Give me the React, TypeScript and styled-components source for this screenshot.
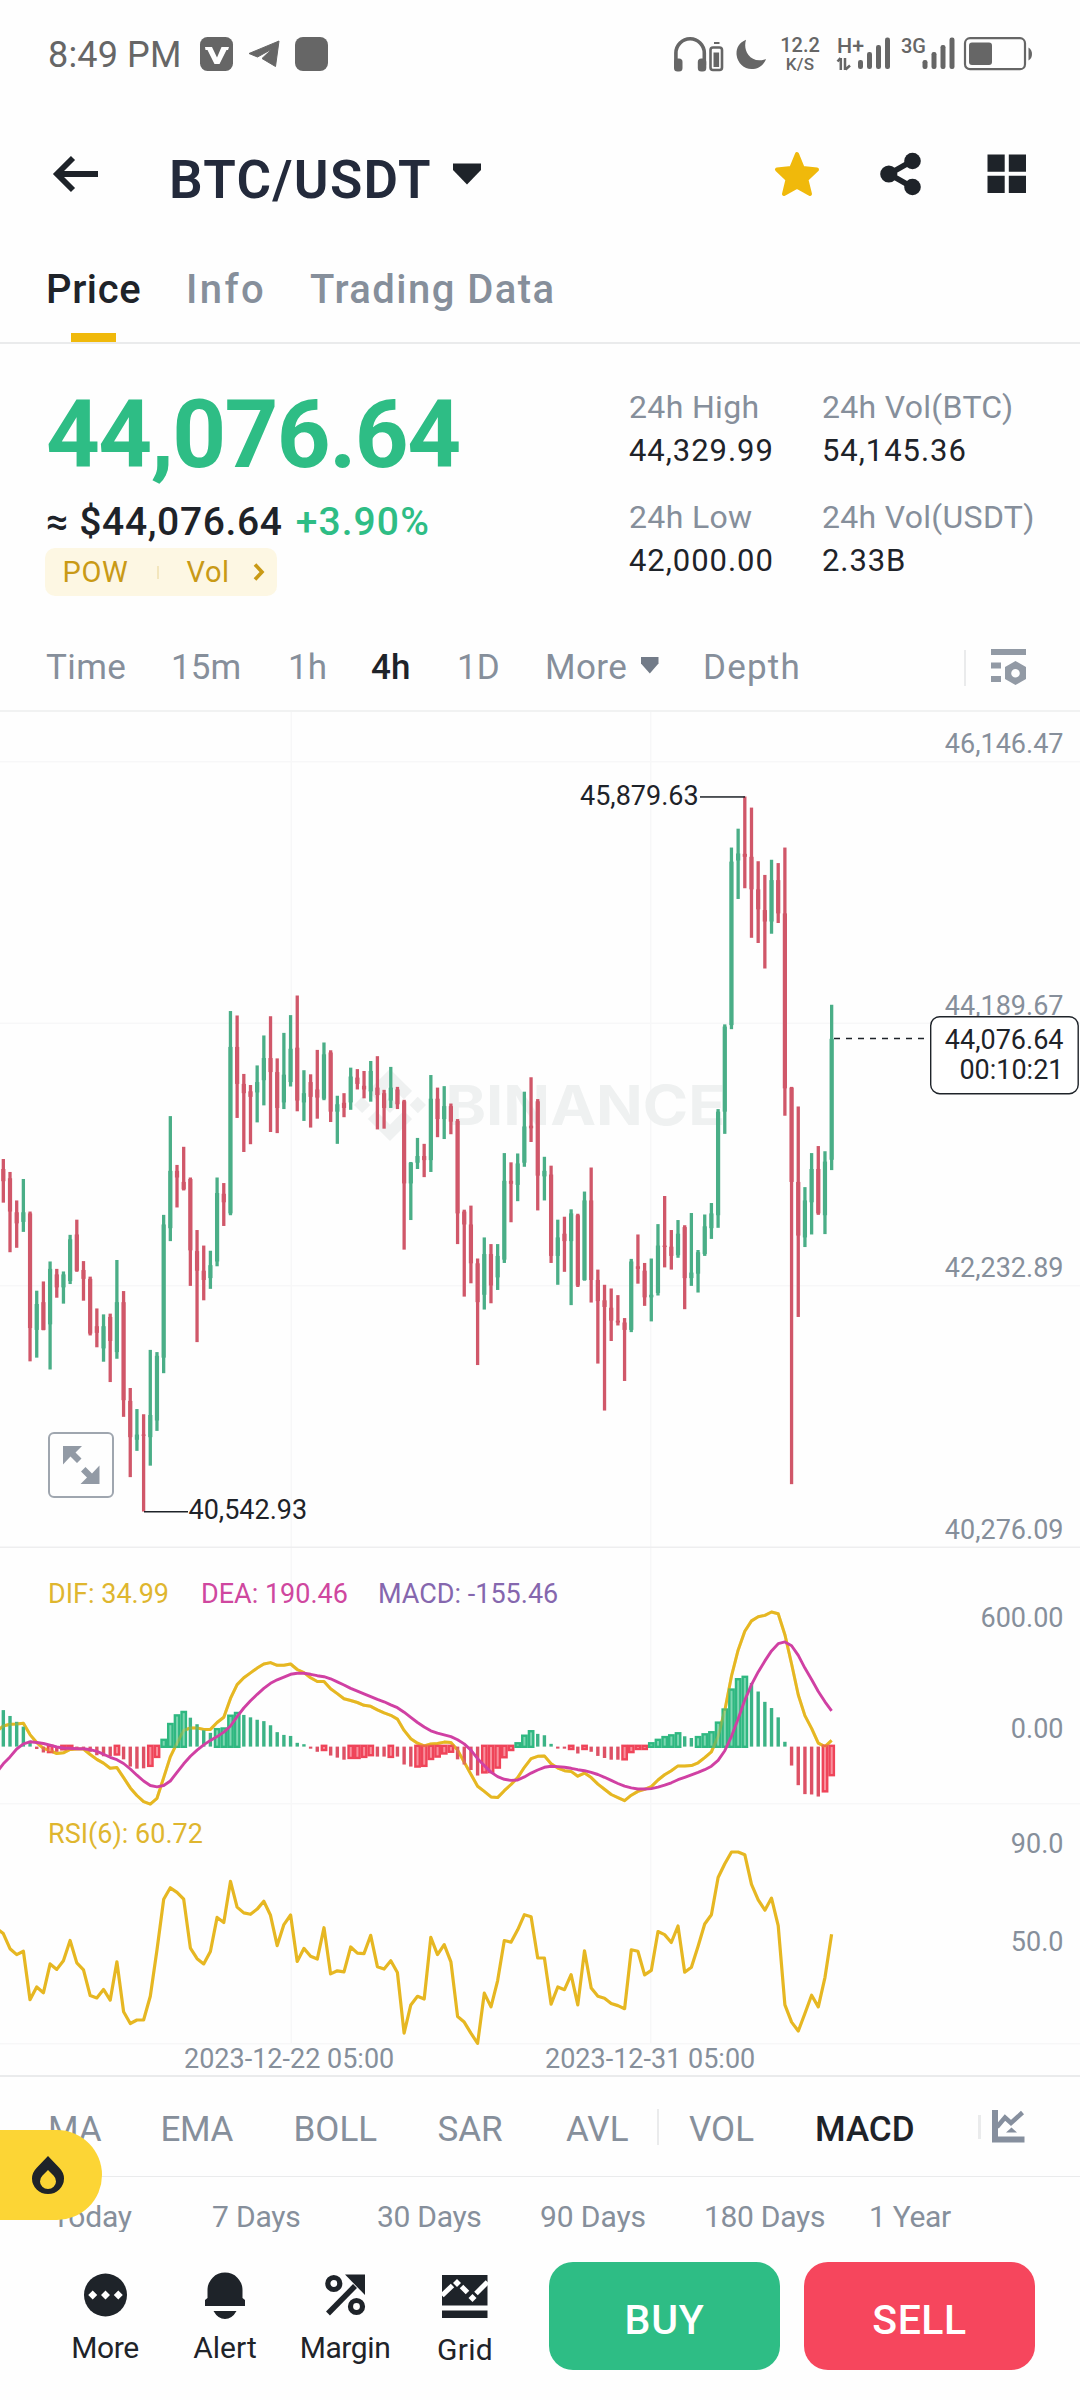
import React from "react";
import styled, { createGlobalStyle } from "styled-components";

const INK = "#1e2329";
const MUTED = "#868f9b";
const GREEN = "#2ebd85";
const RED = "#f6465d";
const GOLD = "#f0b90b";
const LINE = "#eaebec";
const STATUS = "#666666";

const Global = createGlobalStyle`
  html, body { margin: 0; padding: 0; background: #fefefe; }
  * { box-sizing: border-box; }
  svg { display: block; flex: none; overflow: visible; }
`;

const Page = styled.div`
  width: 1080px;
  height: 2400px;
  display: flex;
  flex-direction: column;
  overflow: hidden;
  position: relative;
  background: #fefefe;
  color: ${INK};
  font-family: Roboto, "Noto Sans", sans-serif;
`;

/* ---------- text ---------- */

const Text = styled.span<{
  $size: number;
  $color?: string;
  $weight?: number;
  $track?: number;
  $line?: number;
  $drop?: number;
}>`
  display: block;
  white-space: nowrap;
  font-size: ${(p) => p.$size}px;
  line-height: ${(p) => p.$line ?? p.$size}px;
  font-weight: ${(p) => p.$weight ?? 400};
  color: ${(p) => p.$color ?? INK};
  letter-spacing: ${(p) => p.$track ?? 0}px;
  padding-top: ${(p) => p.$drop ?? 0}px;
`;

/* ---------- status bar ---------- */

const StatusBar = styled.div`
  height: 108px;
  flex: none;
  display: flex;
  align-items: center;
  justify-content: space-between;
  padding: 0 46px 0 48px;
`;

const StatusLeft = styled.div`
  display: grid;
  grid-template-columns: 152px 48px 47px 34px;
  align-items: center;
`;

const StatusRight = styled.div`
  display: grid;
  grid-template-columns: 62px 43px 58px 64px 63px 70px;
  align-items: center;
`;

const Speed = styled.div`
  display: flex;
  flex-direction: column;
  align-items: center;
  width: 42px;
`;

function Bars({ x }: { x: number }) {
  const tops = [22, 14, 7, -0.5];
  return (
    <g fill={STATUS}>
      {tops.map((t, i) => (
        <rect key={i} x={x + i * 9} y={t + 2} width={5} height={32 - t - 1} rx={2.2} />
      ))}
    </g>
  );
}

function Status() {
  return (
    <StatusBar>
      <StatusLeft>
        <Text $size={36} $color={STATUS} $line={42} $track={0.15} $drop={2}>
          8:49 PM
        </Text>
        <svg width="33" height="34" viewBox="0 0 33 34">
          <rect width="33" height="34" rx="7.5" fill={STATUS} />
          <path d="M5 10h7l5 10.5L21.500 10H29l-1 3h-1.500L19.500 27h-5L7.500 13H5.500z" fill="#fff" />
        </svg>
        <svg width="32" height="28" viewBox="0 0 32 28">
          <path d="M1 13.500 31 1l-3.500 25.500-13.500-8L24 9 9.500 17z" fill={STATUS} stroke={STATUS} strokeLinejoin="round" />
        </svg>
        <svg width="34" height="34" viewBox="0 0 34 34">
          <rect width="33" height="34" rx="8" fill={STATUS} />
        </svg>
      </StatusLeft>
      <StatusRight>
        <svg width="50" height="36" viewBox="0 0 50 36">
          <path d="M1.900 29V17a14.200 14.200 0 0 1 28.400 0v12" fill="none" stroke={STATUS} strokeWidth="3.600" />
          <rect x="0" y="22.500" width="8.500" height="13" rx="3.500" fill={STATUS} />
          <rect x="23.800" y="22.500" width="8.500" height="13" rx="3.500" fill={STATUS} />
          <rect x="40" y="6" width="5.500" height="2" fill={STATUS} />
          <rect x="36.500" y="11.500" width="11.500" height="22.500" rx="2.500" fill="none" stroke={STATUS} strokeWidth="2.600" />
          <rect x="39.500" y="16.500" width="5.600" height="14.500" fill={STATUS} />
        </svg>
        <svg width="31" height="31" viewBox="0 0 31 31">
          <path d="M10 .8C2.500 4 0 10 .6 16 1.500 24 8 30 15.500 30c7 0 12.500-4 14.500-10-8 3-14 .5-17.500-4C9 11.500 8.500 6 10 .8z" fill={STATUS} />
        </svg>
        <Speed>
          <Text $size={20} $line={20} $color={STATUS} $weight={500}>12.2</Text>
          <Text $size={17} $line={19} $color={STATUS} $weight={500} $track={0.3}>K/S</Text>
        </Speed>
        <svg width="54" height="36" viewBox="0 0 54 36">
          <text x="0" y="17" fontSize="21" fontWeight="500" fill={STATUS} textLength="27" lengthAdjust="spacingAndGlyphs">H+</text>
          <path d="M.5 25.500 3.500 22M3.800 22v12M8 22v12M8.500 33.500 13 29.500" stroke={STATUS} strokeWidth="2.500" fill="none" />
          <Bars x={21} />
        </svg>
        <svg width="56" height="36" viewBox="0 0 56 36">
          <text x="0" y="17" fontSize="21" fontWeight="500" fill={STATUS} textLength="25" lengthAdjust="spacingAndGlyphs">3G</text>
          <Bars x={21.5} />
        </svg>
        <svg width="70" height="34" viewBox="0 0 70 34">
          <rect x="1" y="1.200" width="60" height="31" rx="5" fill="none" stroke={STATUS} strokeWidth="2.200" />
          <rect x="5" y="5.500" width="23" height="22.500" rx="3" fill={STATUS} />
          <path d="M64.500 10.500q3.500 2 3.500 6.500t-3.500 6.500z" fill={STATUS} />
        </svg>
      </StatusRight>
    </StatusBar>
  );
}

/* ---------- header ---------- */

const HeaderBar = styled.header`
  height: 132px;
  flex: none;
  display: flex;
  align-items: center;
  padding: 0 53px 0 53px;
`;

const PairButton = styled.div`
  display: flex;
  align-items: center;
  gap: 21px;
  margin-left: 70px;
  flex: 1;
`;

const PairName = styled.div`
  padding-top: 12px;
`;

const HeaderActions = styled.div`
  display: grid;
  grid-template-columns: 106px 107px 40px;
  align-items: center;
`;

function Header() {
  return (
    <HeaderBar>
      <svg width="46" height="36" viewBox="0 0 46 36">
        <path d="M45 18H5M20 2 4 18l16 16" fill="none" stroke={INK} strokeWidth="5.800" />
      </svg>
      <PairButton>
        <PairName>
          <Text $size={53} $line={60} $weight={600} $color="#232a3b" $track={1.3}>BTC/USDT</Text>
        </PairName>
        <svg width="28" height="22" viewBox="0 0 28 22">
          <path d="M0 .5h28V7L14 21.500 0 7z" fill={INK} />
        </svg>
      </PairButton>
      <HeaderActions>
        <svg width="46" height="46" viewBox="0 0 46 46">
          <path
            d="M23 3l5.700 14 14.300 1.500-10.600 10 3.600 14.500L23 35.800 10 43l3.500-14.500L3 18.500 17.300 17z"
            fill={GOLD}
            stroke={GOLD}
            strokeWidth="4"
            strokeLinejoin="round"
          />
        </svg>
        <svg width="42" height="44" viewBox="0 0 42 44">
          <path d="M32 9 9 22l23 13" fill="none" stroke={INK} strokeWidth="5.500" />
          <circle cx="32.500" cy="9" r="8.300" fill={INK} />
          <circle cx="8.800" cy="22" r="8.600" fill={INK} />
          <circle cx="32.500" cy="35" r="8.300" fill={INK} />
        </svg>
        <svg width="40" height="40" viewBox="0 0 40 40">
          <path d="M.5.500h17.200v17.200H.5zM21.800.500H39v17.200H21.800zM.5 21.800h17.200V39H.5zM21.800 21.800H39V39H21.800z" fill={INK} />
        </svg>
      </HeaderActions>
    </HeaderBar>
  );
}

const TabRow = styled.nav`
  height: 104px;
  flex: none;
  display: grid;
  grid-template-columns: 140px 124px auto;
  justify-content: start;
  padding-left: 46px;
  border-bottom: 2px solid ${LINE};
`;

const Tab = styled.div`
  display: flex;
  flex-direction: column;
  justify-content: space-between;
  padding-top: 26px;
`;

const TabMark = styled.i`
  width: 45px;
  height: 9px;
  margin-left: 25px;
  background: ${GOLD};
`;

/* ---------- quote ---------- */

const Quote = styled.section`
  height: 260px;
  flex: none;
  display: grid;
  grid-template-columns: 583px 193px auto;
  justify-content: start;
  padding: 36px 0 0 46px;
`;

const LastPrice = styled.div`
  display: flex;
  flex-direction: column;
`;

const FiatRow = styled.div`
  display: flex;
  gap: 13px;
  margin-top: 7px;
`;

const Tags = styled.div`
  width: 232px;
  height: 48px;
  margin: 2px 0 0 -1px;
  border-radius: 10px;
  background: #fdf7e3;
  display: grid;
  grid-template-columns: 94px 30px 66px 12px;
  align-items: center;
  padding-left: 17.5px;
`;

const TagRule = styled.i`
  width: 2px;
  height: 13px;
  background: #f3e6bd;
`;

const Stats = styled.div`
  display: grid;
  grid-template-rows: 50px 60px 50px 40px;
  padding-top: 1px;
`;

/* ---------- intervals ---------- */

const Intervals = styled.div`
  height: 108px;
  flex: none;
  display: grid;
  grid-template-columns: 125px 117px 83px 86px 88px 96px 62px 261px 27px 40px;
  align-items: center;
  padding-left: 46px;
  padding-top: 21px;
  border-bottom: 2px solid #f1f2f2;
`;

const Rule = styled.i<{ $h: number; $w?: number }>`
  display: block;
  width: ${(p) => p.$w ?? 2}px;
  height: ${(p) => p.$h}px;
  background: ${LINE};
`;

/* ---------- chart ---------- */

const ChartArea = styled.section`
  position: relative;
  height: 1363px;
  flex: none;
`;

const ExpandButton = styled.div`
  position: absolute;
  left: 48px;
  top: 720px;
  width: 66px;
  height: 66px;
  border: 2px solid #9fa6af;
  border-radius: 6px;
  display: flex;
  align-items: center;
  justify-content: center;
  background: #fefefe;
`;

// Each candle: direction, high, low, body top, body bottom (chart units below y = 960).
const candles: [string, number, number, number, number][] = [
  ["R",538,656,565,598],["R",573,790,590,680],["R",650,778,682,712],["G",592,735,682,708],["R",680,1085,685,995],
  ["G",894,1075,930,1000],["R",869,1001,925,1000],["G",815,1107,835,985],["R",835,913,850,885],["G",842,929,850,885],
  ["G",743,876,755,868],["R",702,843,742,840],["R",814,921,838,862],["R",856,1015,862,1010],["R",942,1047,990,1008],
  ["G",958,1086,990,1050],["R",956,1141,965,1030],["G",811,1078,925,1060],["R",895,1235,925,1190],["R",1157,1398,1192,1290],
  ["G",1214,1327,1283,1297],["R",1228,1491,1283,1286],["G",1054,1367,1230,1290],["G",1060,1273,1070,1245],["G",689,1117,715,1075],
  ["G",422,760,570,725],["R",554,669,570,588],["R",505,623,600,620],["R",588,881,592,785],["R",730,1033,787,840],
  ["R",772,920,840,865],["G",786,889,825,860],["G",588,828,630,815],["R",603,719,632,655],["G",138,690,235,685],
  ["R",150,427,235,335],["R",308,519,335,360],["R",338,498,355,370],["G",285,439,330,358],["G",204,393,265,325],
  ["R",152,465,265,303],["R",266,468,303,400],["G",197,403,310,385],["G",149,342,240,330],["R",96,409,237,380],
  ["G",298,435,360,385],["R",309,453,330,370],["R",243,429,350,372],["G",223,379,255,375],["R",244,438,250,410],
  ["G",367,497,390,410],["R",360,425,386,400],["G",291,405,315,385],["R",295,350,318,335],["R",300,374,340,350],
  ["G",273,383,300,355],["R",260,458,345,365],["R",351,456,360,400],["G",289,400,345,380],["R",343,403,350,390],
  ["R",378,783,382,604],["G",546,703,548,604],["G",481,565,530,548],["R",497,587,530,541],["G",311,573,375,541],
  ["R",345,479,375,430],["G",341,484,395,430],["R",388,471,395,437],["R",430,768,435,685],["R",675,910,680,715],
  ["R",664,874,715,820],["R",807,1095,820,925],["G",750,945,795,905],["R",768,928,795,880],["G",768,892,800,858],
  ["G",522,819,597,810],["R",547,709,597,605],["G",523,652,550,608],["G",356,559,450,548],["R",317,492,448,455],
  ["R",376,677,382,583],["G",532,650,570,585],["R",556,819,580,800],["G",702,878,750,800],["R",694,843,740,760],
  ["G",674,933,685,760],["R",686,884,690,880],["G",626,867,650,865],["R",561,926,650,865],["R",837,1091,865,922],
  ["R",878,1218,920,938],["R",888,1030,940,975],["R",906,988,975,980],["R",968,1138,980,1000],["G",808,1006,815,1000],
  ["R",742,875,828,835],["R",819,935,840,912],["G",807,977,905,912],["G",714,907,772,900],["R",638,831,772,776],
  ["R",730,837,775,800],["G",703,805,740,798],["R",717,944,722,860],["G",684,881,845,860],["G",784,899,790,848],
  ["G",688,800,720,795],["G",657,754,685,725],["G",403,724,410,690],["G",174,470,180,410],["G",-304,187,-266,176],
  ["G",-355,-165,-288,-269],["R",-442,-194,-287,-279],["R",-412,-60,-279,-191],["R",-267,-46,-191,-137],["R",-230,23,-135,-104],
  ["G",-271,-71,-216,-104],["R",-262,-100,-216,-126],["R",-304,421,-126,347],["R",343,1417,345,600],["R",396,965,600,745],
  ["G",614,776,650,750],["G",522,742,565,655],["R",503,689,565,685],["G",517,741,545,690],["G",121,568,213,540],
];

// Histogram end points; a trailing "h" marks a hollow bar.
const hist =
  "494 511 528 542 583 607 617 620h 615 612h 611h 606 606 615 625 628 628 627h 637 658 664 663 660h 634h 578h 532h 507h 497h 516 535 552 560 547h 545h 508h 500h 508 515 522 526 538 558 566 569 589 593 606 615 614h 626 632 638 637h 637h 634h 629h 629 629 634h 629 652 658 662h 660h 640h 633h 624h 619h 637 652 668 684 679h 678h 665h 635h 614h 588h 566h 553h 563 567 592 605 606 611h 620 611h 615 627 633 638 638 641h 620h 611h 611h 588h 578h 570h 565h 559h 570 575 570h 562h 556h 528h 490h 432h 402h 395h 415 440 470 488 515 586 655 712 738 739 745 734h 687h".split(" ");

const nums = (s: string) => s.split(" ").map(Number);

const dif = nums(
  "555 540 535 534 532 565 588 605 612 620 618 608 607 607 623 637 648 663 661 690 720 742 760 767 750 690 630 590 553 546 546 550 550 530 515 460 420 400 386 372 360 356 364 364 360 376 385 400 411 411 432 446 461 466 472 480 483 493 502 509 520 553 577 590 598 592 591 587 588 610 645 680 715 730 746 748 728 710 690 660 635 628 627 650 662 670 672 686 677 690 709 724 739 748 757 741 730 724 716 697 682 670 656 656 655 647 632 615 570 495 395 320 265 235 223 219 209 214 275 360 450 510 547 590 600 582"
);
const dea = nums(
  "675 650 630 607 592 586 588 591 596 601 604 605 606 606 609 614 622 631 638 649 665 683 700 713 717 713 700 675 650 628 610 595 582 571 558 540 513 488 467 448 431 416 406 398 390 387 387 390 394 397 403 412 421 431 439 447 455 463 470 479 487 500 515 530 543 554 561 566 571 580 592 610 635 655 674 687 695 698 697 688 677 668 660 657 658 660 663 667 670 675 681 689 698 707 715 720 723 723 722 718 712 705 696 689 682 675 667 657 640 612 570 520 465 420 383 351 322 301 296 307 335 372 405 440 470 496"
);
const rsi = nums(
  "1128 1143 1187 1204 1194 1335 1298 1315 1231 1247 1222 1163 1228 1248 1323 1330 1305 1336 1225 1370 1404 1394 1394 1325 1190 1043 1010 1023 1043 1185 1216 1231 1195 1096 1111 991 1066 1083 1087 1072 1049 1090 1178 1117 1089 1224 1186 1209 1217 1126 1260 1251 1254 1182 1200 1201 1148 1239 1246 1222 1256 1432 1350 1325 1333 1154 1204 1175 1225 1384 1400 1432 1462 1316 1356 1280 1163 1168 1132 1088 1094 1214 1214 1348 1298 1306 1262 1350 1193 1301 1325 1331 1346 1352 1361 1190 1194 1263 1250 1137 1146 1169 1121 1255 1241 1180 1115 1088 980 940 906 906 914 1000 1045 1075 1040 1120 1350 1400 1426 1375 1322 1356 1270 1145"
);

const xAt = (i: number) => 3.33 + i * 6.68;
const candleY = (v: number) => 960 + v / 2.7034;
const studyY = (v: number) => 1540 + v / 2.904;
// Study series begin one step left of the visible area.
const linePath = (series: number[]) =>
  series.map((v, k) => `${k ? "L" : "M"}${xAt(k - 1).toFixed(1)} ${studyY(v).toFixed(1)}`).join("");

const ZERO = studyY(600);

function AxisLabel({ y, children, color = MUTED }: { y: number; children: string; color?: string }) {
  return (
    <text x={1063.5} y={y} textAnchor="end" fill={color}>
      {children}
    </text>
  );
}

function Chart() {
  return (
    <ChartArea>
      <svg width="1080" height="1363" viewBox="0 712 1080 1363" fontSize="27" fontFamily="Roboto, sans-serif">
        <g fill="#f7f7f8">
          {[761, 1022.5, 1285, 1803, 2043].map((y) => (
            <rect key={y} x="0" y={y} width="1080" height="1.500" />
          ))}
          <rect x="290.500" y="712" width="1.500" height="1332" />
          <rect x="650" y="712" width="1.500" height="1332" />
        </g>
        <rect x="0" y="1546.500" width="1080" height="1.500" fill="#eeeeef" />

        <g fill="#eff1f1">
          <path
            transform="translate(354 1069) scale(3)"
            d="M16.624 13.920l2.718 2.715-7.353 7.353-7.353-7.352 2.717-2.716 4.636 4.660 4.635-4.660zm4.637-4.636L24 12l-2.715 2.716L18.568 12l2.693-2.716zm-9.272 0l2.716 2.692-2.716 2.717L9.272 12l2.717-2.716zm-9.273 0L5.409 12l-2.692 2.692L0 12l2.716-2.716zM11.989.012l7.353 7.329-2.718 2.715-4.635-4.636-4.636 4.660-2.717-2.715 7.353-7.353z"
          />
          <text x="445.500" y="1124.500" fontFamily="Inter, sans-serif" fontWeight="700" fontSize="54.500" textLength="280" lengthAdjust="spacingAndGlyphs">
            BINANCE
          </text>
        </g>

        {candles.map(([dir, high, low, top, bottom], i) => (
          <g key={i} fill={dir === "G" ? "#4aae87" : "#d05769"}>
            <rect x={xAt(i) - 1.65} y={candleY(high)} width={3.3} height={candleY(low) - candleY(high)} />
            <rect x={xAt(i) - 2.1} y={candleY(top)} width={4.2} height={candleY(bottom) - candleY(top)} />
          </g>
        ))}

        <g fill={INK}>
          <text x="580" y="804.700">45,879.63</text>
          <rect x="700" y="796.200" width="45" height="1.500" />
          <text x="188.500" y="1518.700">40,542.93</text>
          <rect x="144" y="1511" width="44" height="1.500" />
        </g>

        <AxisLabel y={752.9}>46,146.47</AxisLabel>
        <AxisLabel y={1014.8}>44,189.67</AxisLabel>
        <AxisLabel y={1276.9}>42,232.89</AxisLabel>
        <AxisLabel y={1539}>40,276.09</AxisLabel>

        <path d="M834 1038.500h90" stroke={INK} strokeWidth="1.500" strokeDasharray="6 6" />
        <rect x="930.700" y="1016.700" width="147.500" height="77" rx="9" fill="#fff" stroke={INK} strokeWidth="1.400" />
        <AxisLabel y={1048.5} color={INK}>44,076.64</AxisLabel>
        <AxisLabel y={1078.5} color={INK}>00:10:21</AxisLabel>

        <text x="48" y="1603" fill="#dfb62f">DIF: 34.99</text>
        <text x="201" y="1603" fill="#cf479f">DEA: 190.46</text>
        <text x="378" y="1603" fill="#8567ae">MACD: -155.46</text>
        <AxisLabel y={1626.5}>600.00</AxisLabel>
        <AxisLabel y={1737.7}>0.00</AxisLabel>

        <path d={linePath(dif)} fill="none" stroke="#e6b722" strokeWidth="3" strokeLinejoin="round" />
        {hist.map((raw, i) => {
          const hollow = raw.endsWith("h");
          const end = studyY(parseInt(raw, 10));
          const top = Math.min(end, ZERO);
          const h = Math.max(Math.abs(end - ZERO), 2);
          const up = end < ZERO;
          return hollow ? (
            <rect
              key={i}
              x={xAt(i) - 2.15}
              y={up ? top + 0.8 : top - 0.8}
              width={4.4}
              height={Math.max(h - 0.6, 2)}
              fill={up ? "#7fd6b2" : "#f9909d"}
              stroke={up ? "#2fb881" : "#ef4459"}
              strokeWidth="2.400"
            />
          ) : (
            <rect key={i} x={xAt(i) - 1.7} y={top} width={3.4} height={h} fill={up ? "#3cb386" : "#dd5165"} />
          );
        })}
        <path d={linePath(dif)} fill="none" stroke="#e6b722" strokeWidth="3" strokeLinejoin="round" opacity="0.350" />
        <path d={linePath(dea)} fill="none" stroke="#d040a3" strokeWidth="2.900" strokeLinejoin="round" />

        <text x="48" y="1843" fill="#dfb62f">RSI(6): 60.72</text>
        <AxisLabel y={1852.7}>90.0</AxisLabel>
        <AxisLabel y={1950.5}>50.0</AxisLabel>
        <path d={linePath(rsi)} fill="none" stroke="#e6b722" strokeWidth="3.200" strokeLinejoin="round" />

        <text x="184" y="2067.500" fill={MUTED}>2023-12-22 05:00</text>
        <text x="545" y="2067.500" fill={MUTED}>2023-12-31 05:00</text>
      </svg>
      <ExpandButton>
        <svg width="37" height="38" viewBox="0 0 37 38" fill="#929aa5">
          <path d="M0 0h19l-6.500 6.500 6 6-4.500 4.500-6.500-6.500L0 18.500zM36.500 38h-19l6.500-6.500-6-6 4.500-4.500 6.500 6.500 7.500-8z" />
        </svg>
      </ExpandButton>
    </ChartArea>
  );
}

/* ---------- indicators and ranges ---------- */

const Indicators = styled.div`
  height: 102px;
  flex: none;
  display: grid;
  grid-template-columns: 112.5px 133px 144px 128.5px 91px 32px 126px 163px 14px 34px;
  align-items: center;
  padding-left: 48px;
  border-top: 2px solid ${LINE};
  border-bottom: 1px solid ${LINE};
`;

const Ranges = styled.div`
  height: 55px;
  flex: none;
  overflow: hidden;
  display: grid;
  grid-template-columns: 160px 165px 163px 164px 165px auto;
  justify-content: start;
  padding: 20px 0 0 52px;
`;

const HotButton = styled.div`
  position: absolute;
  left: 0;
  top: 2130px;
  width: 102px;
  height: 90px;
  padding-left: 32px;
  display: flex;
  align-items: center;
  border-radius: 0 45px 45px 0;
  background: #fcd535;
`;

/* ---------- bottom bar ---------- */

const BottomBar = styled.footer`
  flex: 1;
  display: grid;
  grid-template-columns: 122px 118px 122px 118px 25px 231px 24px 231px;
  justify-content: start;
  padding: 30px 0 0 44px;
`;

const Action = styled.div<{ $shift?: number }>`
  display: flex;
  flex-direction: column;
  align-items: center;
  padding-top: ${(p) => 8 + (p.$shift ?? 0)}px;
`;

const ActionIcon = styled.div`
  height: 50px;
  display: flex;
  align-items: center;
`;

const TradeButton = styled.div<{ $bg: string }>`
  height: 108px;
  border-radius: 24px;
  background: ${(p) => p.$bg};
  display: flex;
  align-items: center;
  justify-content: center;
  padding-top: 8px;
`;

function Footer() {
  return (
    <BottomBar>
      <Action>
        <ActionIcon>
          <svg width="43" height="44" viewBox="0 0 43 44">
            <circle cx="21.500" cy="22" r="21.500" fill={INK} />
            <path d="M8.700 17.500l4.500 4.500-4.500 4.500L4.200 22zM21.500 17.500L26 22l-4.500 4.500L17 22zM34.300 17.500l4.500 4.500-4.500 4.500-4.500-4.500z" fill="#fff" />
          </svg>
        </ActionIcon>
        <Text $size={30} $line={52} $track={-0.4} $drop={2}>More</Text>
      </Action>
      <Action>
        <ActionIcon>
          <svg width="40" height="47" viewBox="0 0 40 47" fill={INK}>
            <path d="M0 34v-6l2.500-2V18a17.500 17.500 0 0 1 35 0v8l2.500 2v6zM8.500 39h23q-4.500 8-11.500 8t-11.500-8z" />
          </svg>
        </ActionIcon>
        <Text $size={30} $line={52} $drop={2}>Alert</Text>
      </Action>
      <Action>
        <ActionIcon>
          <svg width="41" height="42" viewBox="0 0 41 42">
            <path d="M3 39.500 30 12" stroke={INK} strokeWidth="5.500" />
            <path d="M20 .5h20v20.500z" fill={INK} />
            <circle cx="8.800" cy="9.500" r="6" fill="none" stroke={INK} strokeWidth="5.200" />
            <circle cx="31.500" cy="32.500" r="6" fill="none" stroke={INK} strokeWidth="5.200" />
          </svg>
        </ActionIcon>
        <Text $size={30} $line={52} $track={-0.4} $drop={2}>Margin</Text>
      </Action>
      <Action $shift={2}>
        <ActionIcon>
          <svg width="46" height="44" viewBox="0 0 46 44">
            <path d="M0 0h45.500v30.500H0zM0 35.500h45.500V43H0z" fill={INK} />
            <path d="M0 20.500 10.500 10.500M19.500 11.500l6 6M34 18.500 45.500 7" stroke="#fff" strokeWidth="5" fill="none" />
            <path d="M15 4l4 4-4 4-4-4zM30.500 19l4 4-4 4-4-4z" fill="#fff" />
          </svg>
        </ActionIcon>
        <Text $size={30} $line={52} $track={0.3} $drop={2}>Grid</Text>
      </Action>
      <i />
      <TradeButton $bg={GREEN}>
        <Text $size={41} $weight={500} $color="#fff" $track={0.7}>BUY</Text>
      </TradeButton>
      <i />
      <TradeButton $bg={RED}>
        <Text $size={41} $weight={500} $color="#fff" $track={0.5}>SELL</Text>
      </TradeButton>
    </BottomBar>
  );
}

const intervalsBeforeMore: [string, boolean, number][] = [
  ["Time", false, 0.4],
  ["15m", false, 0.1],
  ["1h", false, 0],
  ["4h", true, 0.2],
  ["1D", false, 0],
  ["More", false, 0.4],
];

export default function App() {
  return (
    <Page>
      <Global />
      <Status />
      <Header />
      <TabRow>
        <Tab>
          <Text $size={40} $line={48} $weight={500} $track={0.6}>Price</Text>
          <TabMark />
        </Tab>
        <Tab>
          <Text $size={40} $line={48} $weight={500} $color={MUTED} $track={2.4}>Info</Text>
        </Tab>
        <Tab>
          <Text $size={40} $line={48} $weight={500} $color={MUTED} $track={1.45}>Trading Data</Text>
        </Tab>
      </TabRow>

      <Quote>
        <LastPrice>
          <Text $size={94} $line={111} $weight={700} $color={GREEN} $track={-1.6}>44,076.64</Text>
          <FiatRow>
            <Text $size={39} $line={48} $weight={500} $track={0.65}>≈ $44,076.64</Text>
            <Text $size={39} $line={48} $weight={500} $color={GREEN} $track={1.1}>+3.90%</Text>
          </FiatRow>
          <Tags>
            <Text $size={29} $line={34} $color="#c99a16" $track={0.6}>POW</Text>
            <TagRule />
            <Text $size={29} $line={34} $color="#c99a16" $track={0.6}>Vol</Text>
            <svg width="12" height="18" viewBox="0 0 12 18">
              <path d="M2 1.500 9 9l-7 7.500" fill="none" stroke="#c99a16" strokeWidth="3.600" />
            </svg>
          </Tags>
        </LastPrice>
        <Stats>
          <Text $size={32} $line={52} $color={MUTED} $track={0.35}>24h High</Text>
          <Text $size={31} $line={40} $track={0.95}>44,329.99</Text>
          <Text $size={32} $line={52} $color={MUTED} $track={0.35}>24h Low</Text>
          <Text $size={31} $line={40} $track={0.95}>42,000.00</Text>
        </Stats>
        <Stats>
          <Text $size={32} $line={52} $color={MUTED} $track={0.3}>24h Vol(BTC)</Text>
          <Text $size={31} $line={40} $track={0.95}>54,145.36</Text>
          <Text $size={32} $line={52} $color={MUTED} $track={0.3}>24h Vol(USDT)</Text>
          <Text $size={31} $line={40} $track={0.9}>2.33B</Text>
        </Stats>
      </Quote>

      <Intervals>
        {intervalsBeforeMore.map(([label, active, track]) => (
          <Text key={label} $size={35} $line={40} $track={track} $weight={active ? 500 : 400} $color={active ? INK : MUTED}>
            {label}
          </Text>
        ))}
        <svg width="18" height="22" viewBox="0 0 18 22">
          <path d="M0 0h17.500v6.500L8.800 16.500 0 6.500z" fill="#727b88" />
        </svg>
        <Text $size={35} $line={40} $color={MUTED} $track={1.2}>Depth</Text>
        <Rule $h={36} />
        <svg width="36" height="38" viewBox="0 0 36 38" fill="#929aa5">
          <path d="M0 0h35v6H0zM0 13.500h10v6H0zM0 27h10v6H0z" />
          <path fillRule="evenodd" d="M24.500 12 35 18v12l-10.500 6L14 30V18zm0 8a4.300 4.300 0 1 0 0 8.600 4.300 4.300 0 0 0 0-8.600z" />
        </svg>
      </Intervals>

      <Chart />

      <Indicators>
        <Text $size={35} $line={40} $drop={6} $color={MUTED}>MA</Text>
        <Text $size={35} $line={40} $drop={6} $color={MUTED} $track={-0.4}>EMA</Text>
        <Text $size={35} $line={40} $drop={6} $color={MUTED}>BOLL</Text>
        <Text $size={35} $line={40} $drop={6} $color={MUTED}>SAR</Text>
        <Text $size={35} $line={40} $drop={6} $color={MUTED}>AVL</Text>
        <Rule $h={36} />
        <Text $size={35} $line={40} $drop={6} $color={MUTED}>VOL</Text>
        <Text $size={35} $line={40} $drop={6} $weight={500}>MACD</Text>
        <Rule $h={24} $w={3} />
        <svg width="33" height="33" viewBox="0 0 33 33">
          <path d="M3 0v29.500h29.500" fill="none" stroke="#868f9e" strokeWidth="6" />
          <path d="M5 17l8-9.500 6 5.500L30.500 2.500" fill="none" stroke="#868f9e" strokeWidth="4.500" />
          <path d="M14 22.500l5.500-5 5.500 5z" fill="#868f9e" />
        </svg>
      </Indicators>
      <Ranges>
        <Text $size={30} $line={40} $color={MUTED} $track={-0.2}>Today</Text>
        <Text $size={30} $line={40} $color={MUTED} $track={-0.2}>7 Days</Text>
        <Text $size={30} $line={40} $color={MUTED} $track={-0.3}>30 Days</Text>
        <Text $size={30} $line={40} $color={MUTED} $track={-0.1}>90 Days</Text>
        <Text $size={30} $line={40} $color={MUTED} $track={-0.3}>180 Days</Text>
        <Text $size={30} $line={40} $color={MUTED} $track={-0.3}>1 Year</Text>
      </Ranges>
      <Footer />
      <HotButton>
        <svg width="32" height="38" viewBox="0 0 32 38">
          <path
            fillRule="evenodd"
            d="M16 0 27 11.500q5 5 5 11a16 15.500 0 0 1-32 0q0-6 5-11zM16 14l-5.500 5.500q-2.500 2.500-2.500 6a8 7.500 0 0 0 16 0q0-3.500-2.500-6z"
            fill={INK}
          />
        </svg>
      </HotButton>
    </Page>
  );
}
